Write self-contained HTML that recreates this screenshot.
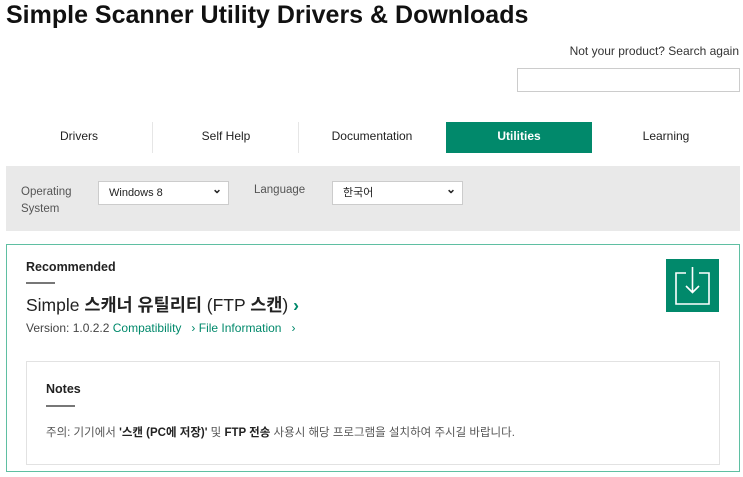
<!DOCTYPE html>
<html><head><meta charset="utf-8"><style>
*{box-sizing:border-box;margin:0;padding:0}
body{width:743px;height:477px;background:#fff;font-family:"Liberation Sans","Noto Sans CJK KR",sans-serif;color:#222;position:relative;overflow:hidden}
.a{position:absolute}
h1{position:absolute;left:6px;top:1px;font-size:25px;font-weight:bold;color:#111;white-space:nowrap}
.tab{position:absolute;top:122px;height:31px;line-height:29px;text-align:center;font-size:12px;color:#222;width:146px}
.sep{position:absolute;top:122px;width:1px;height:31px;background:#e6e6e6}
.sel{position:absolute;height:24px;background:#fff;border:1px solid #ccc;font-size:11px;line-height:22px;padding-left:10px;color:#222}
.sel:after{content:"⌄";position:absolute;right:6px;top:-4px;font-size:12px;font-weight:bold}
.g{color:#01896b}
</style></head><body>
<h1>Simple Scanner Utility Drivers &amp; Downloads</h1>
<div class="a" style="right:4px;top:44px;font-size:12px;color:#333">Not your product? Search again</div>
<div class="a" style="left:517px;top:68px;width:223px;height:24px;border:1px solid #ccc"></div>
<div class="tab" style="left:6px">Drivers</div>
<div class="sep" style="left:152px"></div>
<div class="tab" style="left:153px">Self Help</div>
<div class="sep" style="left:298px"></div>
<div class="tab" style="left:299px">Documentation</div>
<div class="tab" style="left:446px;background:#01896b;color:#fff;font-weight:bold">Utilities</div>
<div class="tab" style="left:593px">Learning</div>
<div class="a" style="left:6px;top:166px;width:734px;height:65px;background:#e9e9e9"></div>
<div class="a" style="left:21px;top:184px;font-size:11.5px;line-height:17px;color:#555">Operating<br>System</div>
<div class="sel" style="left:98px;top:181px;width:131px">Windows 8</div>
<div class="a" style="left:254px;top:184px;font-size:11.5px;color:#555">Language</div>
<div class="sel" style="left:332px;top:181px;width:131px">한국어</div>
<div class="a" style="left:6px;top:244px;width:734px;height:228px;border:1px solid #5fbfa2"></div>
<div class="a" style="left:26px;top:260px;font-size:12.5px;font-weight:bold;color:#222">Recommended</div>
<div class="a" style="left:26px;top:282px;width:29px;height:2px;background:#777"></div>
<div class="a" style="left:26px;top:292px;font-size:17.5px;color:#222;white-space:nowrap">Simple <b>스캐너 유틸리티</b> (FTP <b>스캔</b>) <b class="g">›</b></div>
<div class="a" style="left:26px;top:321px;font-size:12px;color:#444;white-space:nowrap">Version: 1.0.2.2 <span class="g">Compatibility &nbsp;&nbsp;› File Information &nbsp;&nbsp;›</span></div>
<div class="a" style="left:666px;top:259px;width:53px;height:53px;background:#01896b">
<svg width="53" height="53" viewBox="0 0 53 53"><path d="M20 14H10V45H43V14H33" fill="none" stroke="#fff" stroke-width="1.6"/><path d="M26.5 8V33M20 27l6.5 6.5L33 27" fill="none" stroke="#fff" stroke-width="1.6"/></svg></div>
<div class="a" style="left:26px;top:361px;width:694px;height:104px;border:1px solid #e2e2e2"></div>
<div class="a" style="left:46px;top:382px;font-size:12.5px;font-weight:bold;color:#222">Notes</div>
<div class="a" style="left:46px;top:405px;width:29px;height:2px;background:#777"></div>
<div class="a" style="left:46px;top:424px;font-size:11.5px;color:#555;white-space:nowrap">주의: 기기에서 <b style="color:#222">'스캔 (PC에 저장)'</b> 및 <b style="color:#222">FTP 전송</b> 사용시 해당 프로그램을 설치하여 주시길 바랍니다.</div>
</body></html>
